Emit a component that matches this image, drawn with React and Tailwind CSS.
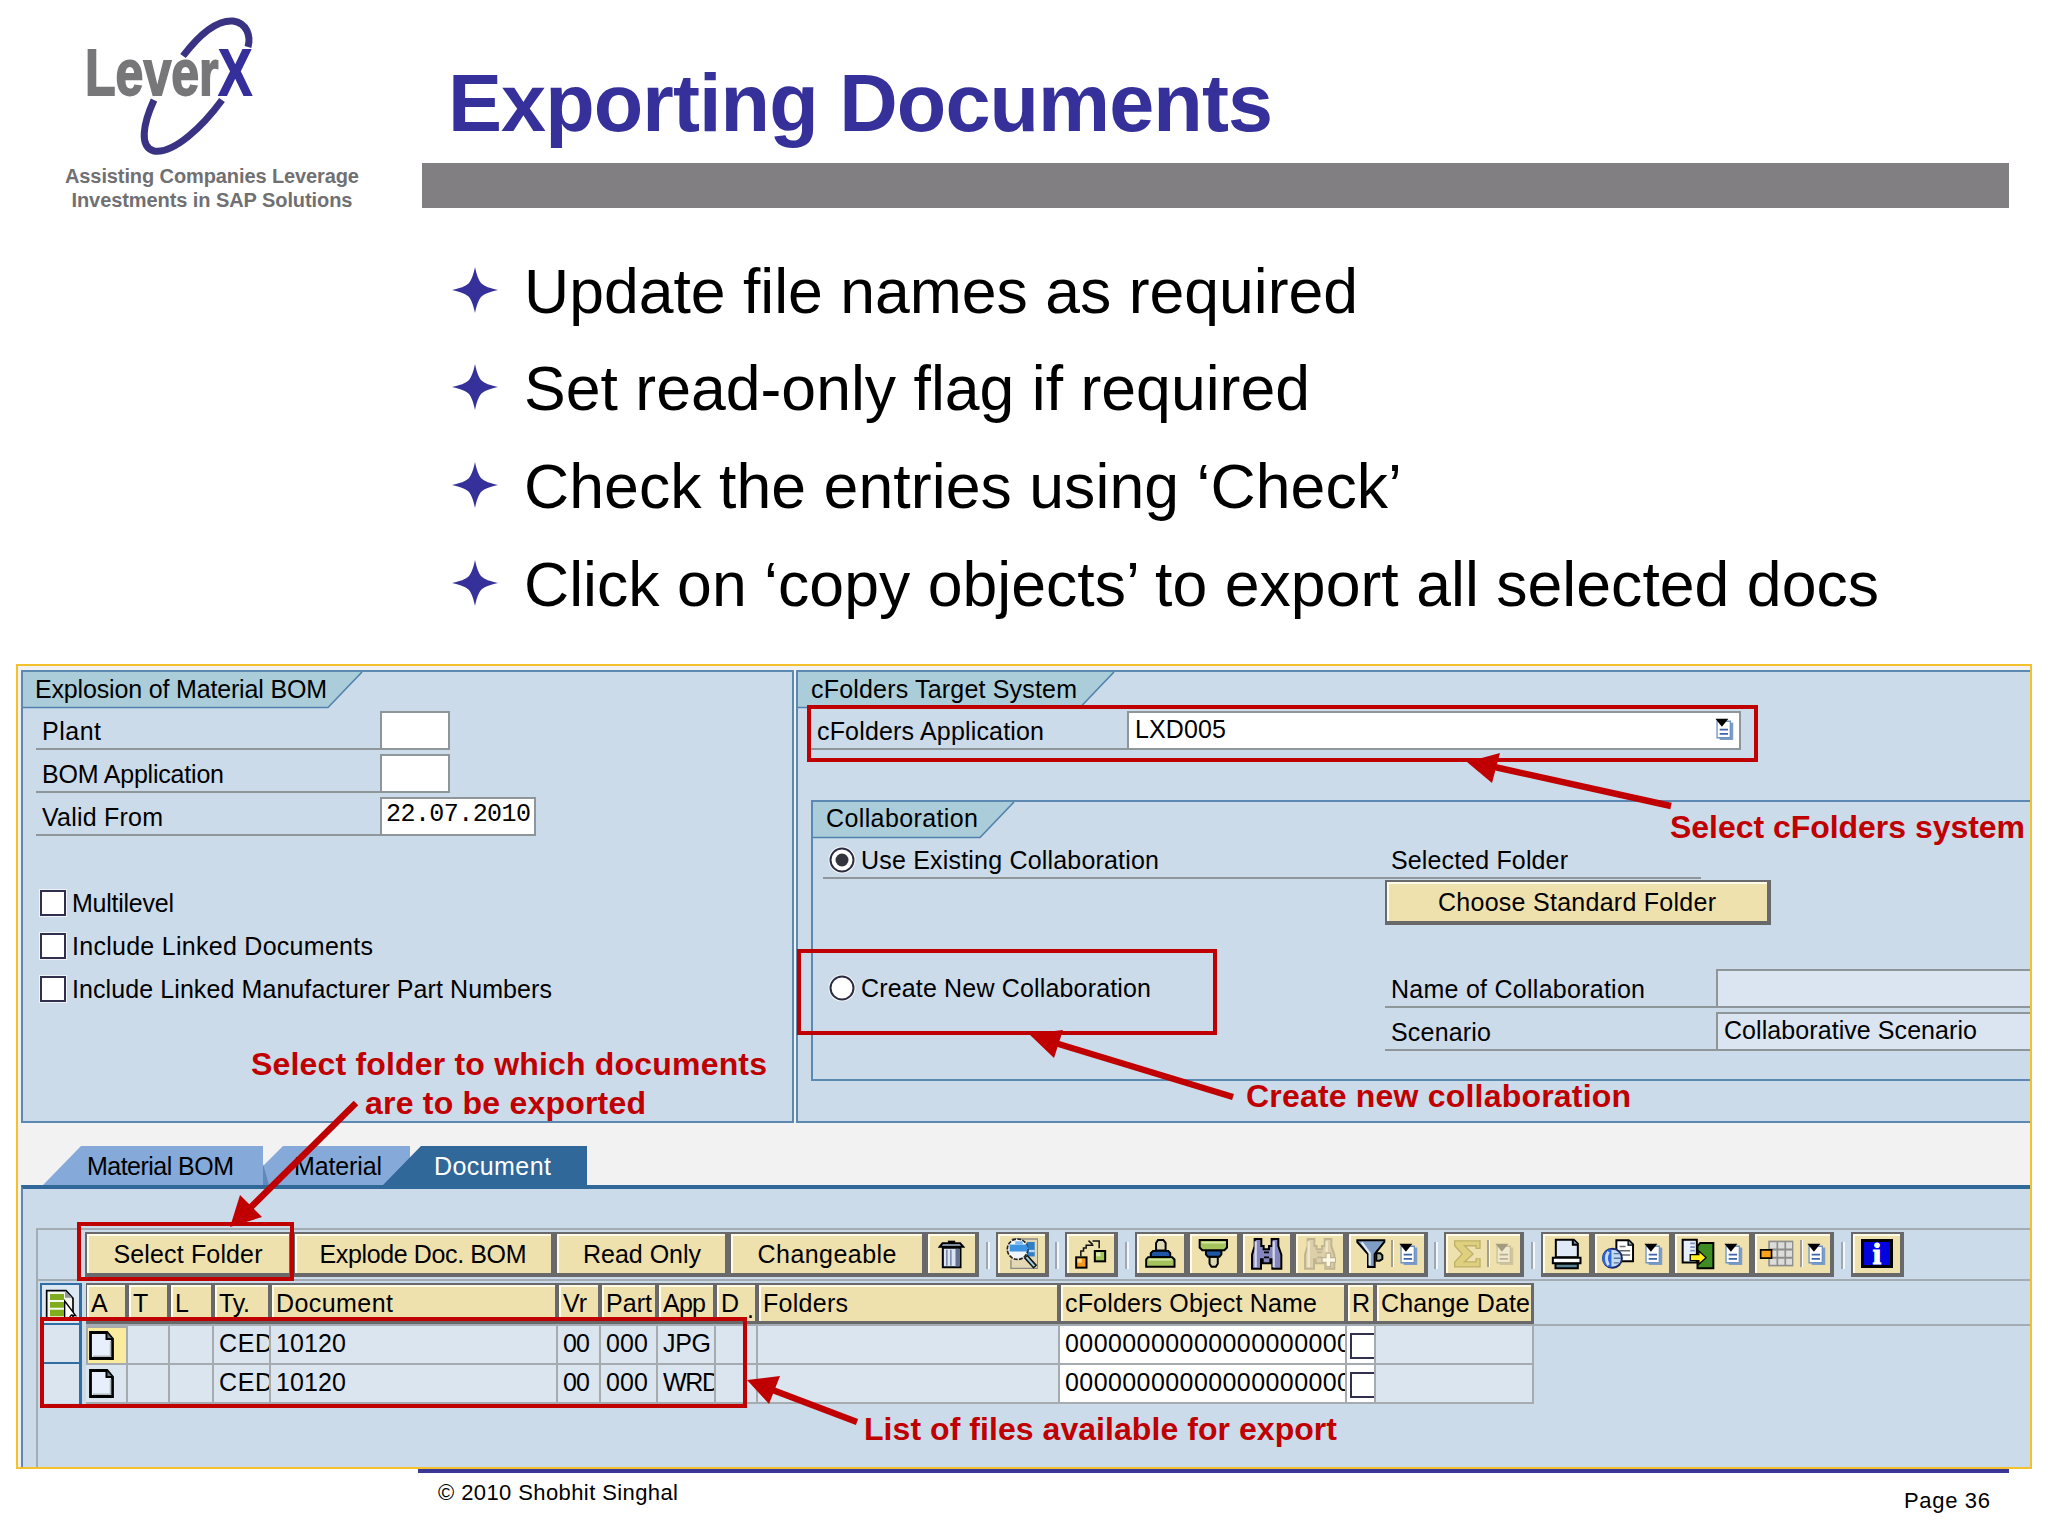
import { useLayoutEffect, useRef } from 'react';
import clsx from 'clsx';

const BULLETS = [
  { text: 'Update file names as required', width: 'w-[834px]' },
  { text: 'Set read-only flag if required', width: 'w-[786px]' },
  { text: 'Check the entries using ‘Check’', width: 'w-[878px]' },
  { text: 'Click on ‘copy objects’ to export all selected docs', width: 'w-[1355px]' },
];

const COLUMNS = [
  { key: 'a', label: 'A', width: 'w-[42px]', text: 'w-[16px]' },
  { key: 't', label: 'T', width: 'w-[42px]', text: 'w-[15px]' },
  { key: 'l', label: 'L', width: 'w-[44px]', text: 'w-[14px]' },
  { key: 'type', label: 'Ty.', width: 'w-[57px]', text: 'w-[31px]' },
  { key: 'document', label: 'Document', width: 'w-[287px]', text: 'w-[117px]' },
  { key: 'version', label: 'Vr', width: 'w-[43px]', text: 'w-[24px]' },
  { key: 'part', label: 'Part', width: 'w-[57px]', text: 'w-[46px]' },
  { key: 'app', label: 'App', width: 'w-[58px]', text: 'w-[43px]' },
  { key: 'd', label: 'D', width: 'w-[42px]', text: 'w-[17px]', dot: true },
  { key: 'folders', label: 'Folders', width: 'w-[302px]', text: 'w-[85px]' },
  { key: 'name', label: 'cFolders Object Name', width: 'w-[287px]', text: 'w-[252px]' },
  { key: 'r', label: 'R', width: 'w-[29px]', text: 'w-[18px]' },
  { key: 'date', label: 'Change Date', width: 'w-[158px]', text: 'w-[149px]' },
];

const CELL_WIDTHS = {
  type: 'w-[54px]',
  document: 'w-[70px]',
  version: 'w-[27px]',
  part: 'w-[42px]',
  app: 'w-[48px]',
  name: 'w-[286px]',
};

const ROWS = [
  { type: 'CED', document: '10120', version: '00', part: '000', app: 'JPG', name: '00000000000000000000' },
  { type: 'CED', document: '10120', version: '00', part: '000', app: 'WRD', name: '00000000000000000000' },
];

// Spreads the letters so that the text fills the width given by its class.
function Fit({ className, children }) {
  const box = useRef(null);
  const inner = useRef(null);

  useLayoutEffect(() => {
    const el = inner.current;
    el.style.letterSpacing = '0px';
    const count = el.textContent.length;
    if (count < 2) return;
    const room = box.current.clientWidth - el.getBoundingClientRect().width;
    el.style.letterSpacing = `${room / (count - 1)}px`;
  }, [children]);

  return (
    <span ref={box} className={clsx('block shrink-0 whitespace-nowrap', className)}>
      <span ref={inner} className="inline-block whitespace-pre">{children}</span>
    </span>
  );
}

function Logo() {
  return (
    <svg viewBox="0 0 200 150" className="ml-[75px] mt-[10px] h-[150px] w-[200px]">
      <g fill="none" stroke="#3a3384" strokeWidth="7">
        <path d="M108 46 C124 25 142 10 158 11 C172 13 176 26 173 37" />
        <path d="M79 90 C68 114 64 137 79 141 C99 144 128 116 147 90" />
      </g>
      <text x="10" y="85" textLength="167" lengthAdjust="spacingAndGlyphs" fontSize="65" fontWeight="bold" fontFamily="Liberation Sans, sans-serif" strokeWidth="1.800" fill="#77777a" stroke="#77777a">
        Lever<tspan fill="#352f9c" stroke="#352f9c">X</tspan>
      </text>
    </svg>
  );
}

function Star() {
  return (
    <svg viewBox="0 0 46 46" className="h-[46px] w-[46px]" fill="#35309a">
      <path d="M23 0 C25 9 26.500 13 29.500 16.500 C33 19.500 37 21 46 23 C37 25 33 26.500 29.500 29.500 C26.500 33 25 37 23 46 C21 37 19.500 33 16.500 29.500 C13 26.500 9 25 0 23 C9 21 13 19.500 16.500 16.500 C19.500 13 21 9 23 0Z" />
    </svg>
  );
}

function GroupTitle({ points, edge, className, textClass, children }) {
  return (
    <div className={clsx('relative flex items-center', className)}>
      <svg className="absolute left-0 top-0 h-[37px] w-[360px]">
        <polygon points={points} fill="#abcdd9" />
        <polyline points={edge} fill="none" stroke="#4f82ae" strokeWidth="1.600" />
      </svg>
      <Fit className={clsx('relative', textClass)}>{children}</Fit>
    </div>
  );
}

function Checkbox({ className }) {
  return <span className={clsx('block h-[26px] w-[26px] shrink-0 border-2 border-[#30304e] bg-white', className)} />;
}

function CheckRow({ label, width }) {
  return (
    <div className="flex h-[43px] items-center pl-[17px] pt-[2px]">
      <Checkbox className="outline-1 outline-[#eef3f8]" />
      <Fit className={clsx('ml-[6px]', width)}>{label}</Fit>
    </div>
  );
}

function Radio({ checked }) {
  return (
    <svg viewBox="0 0 28 28" className="h-[28px] w-[28px] shrink-0">
      <circle cx="14" cy="14" r="13.500" fill="#f4f7fb" />
      <circle cx="14" cy="14" r="11.500" fill="#fff" stroke="#2c2c40" strokeWidth="2" />
      {checked ? <circle cx="14" cy="14" r="6.500" fill="#34343f" /> : null}
    </svg>
  );
}

function FieldRow({ label, labelWidth, textWidth, field, children }) {
  return (
    <div className="flex h-[43px] pb-[2px]">
      <div className={clsx('flex shrink-0 items-center border-b-2 border-[#8f9699] pl-[6px] pt-[5px]', labelWidth)}>
        <Fit className={textWidth}>{label}</Fit>
      </div>
      <div className={clsx('mt-[2px] flex items-center border-2 border-[#8f9699] pb-[2px]', field)}>{children}</div>
    </div>
  );
}

function MenuIcon({ disabled }) {
  const line = disabled ? '#b9b091' : '#3d66a8';
  return (
    <svg viewBox="176 50 58 68" className="h-[22px] w-[19px] shrink-0">
      <path d="M190 64 H232 V118 H190Z" fill={disabled ? '#cfc59d' : '#7f9cc6'} />
      <path d="M182 60 H223 V111 H182Z" fill={disabled ? '#efe8cc' : '#fff'} stroke={disabled ? '#c9c09a' : '#6d92c4'} strokeWidth="4" />
      <path d="M177 52 H217 L197 77Z" fill={disabled ? '#a29b7f' : '#000'} />
      <path d="M190 86 H216 M190 99 H216" stroke={line} strokeWidth="5" />
    </svg>
  );
}

function TrashIcon() {
  return (
    <svg viewBox="117 52 80 90" className="h-[30px] w-[27px]">
      <path d="M131 78 H184 V137 H131Z" fill="#dbe4f0" stroke="#000" strokeWidth="6" />
      <path d="M143 84 V132 M155 84 V132" stroke="#7f8dac" strokeWidth="5" />
      <path d="M169 82 H181 V134 H169Z" fill="#64708f" />
      <path d="M122 75 L130 65 H183 L192 75Z" fill="#a9bbd2" stroke="#000" strokeWidth="6" />
      <path d="M146 61 H168" stroke="#000" strokeWidth="8" />
    </svg>
  );
}

function DisplayIcon() {
  return (
    <svg viewBox="314 52 100 98" className="h-[33px] w-[33px]">
      <path d="M334 57 H413 V146 H332 V120" fill="#e3d8b4" stroke="#8a8a86" strokeWidth="4" />
      <path d="M380 66 H404 V110 H380Z" fill="#2f7fc8" />
      <path d="M386 90 H404 V97 H386Z" fill="#bcd4ee" />
      <circle cx="352" cy="88" r="31" fill="#f1f6fa" stroke="#222" strokeWidth="5" strokeDasharray="12 4" />
      <path d="M328 74 H382 V95 H328Z" fill="#3f93e0" />
      <path d="M345 64 H368 V74 H345Z" fill="#78b6ee" />
      <path d="M377 110 L406 142" stroke="#111" strokeWidth="15" />
      <path d="M379 112 L403 139" stroke="#9fd0e6" strokeWidth="6" />
    </svg>
  );
}

function LinkIcon() {
  return (
    <svg viewBox="522 52 98 90" className="h-[30px] w-[33px]">
      <path d="M542 104 V88 H550 V79 H558 V71 H580 M565 57 L577 68 M577 58 H597 V80" fill="none" stroke="#111" strokeWidth="4.500" />
      <rect x="528" y="107" width="31" height="31" fill="#f59a1c" stroke="#000" strokeWidth="6" />
      <rect x="532" y="111" width="13" height="12" fill="#ffd98c" />
      <rect x="584" y="88" width="31" height="31" fill="#a6c45c" stroke="#000" strokeWidth="6" />
      <rect x="588" y="92" width="13" height="12" fill="#dcebb0" />
    </svg>
  );
}

function SortUpIcon() {
  return (
    <svg viewBox="732 54 93 88" className="h-[29px] w-[31px]" stroke="#000" strokeWidth="6">
      <path d="M765 89 V66 L771 57 H787 L794 66 V89Z" fill="#ddd9b4" />
      <path d="M749 109 V97 L756 90 H802 L808 97 V109Z" fill="#1e56a4" />
      <path d="M735 138 V116 L741 109 H814 L821 116 V138Z" fill="#a5c35d" />
      <path d="M742 117 H812" stroke="#d5e6a5" strokeWidth="5" />
    </svg>
  );
}

function SortDownIcon() {
  return (
    <svg viewBox="892 54 92 88" className="h-[29px] w-[31px]" stroke="#000" strokeWidth="6">
      <path d="M926 108 H951 V129 L945 138 H932 L926 129Z" fill="#ddd9b4" />
      <path d="M915 88 H962 V101 L956 108 H921 L915 101Z" fill="#1e56a4" />
      <path d="M896 57 H979 V80 L971 88 H904 L896 80Z" fill="#a5c35d" />
      <path d="M902 65 H974" stroke="#d5e6a5" strokeWidth="5" />
    </svg>
  );
}

function FindIcon({ next }) {
  const stroke = next ? '#c0b593' : '#000';
  return (
    <svg viewBox="1054 54 96 96" className="h-[32px] w-[32px]">
      <path d="M1065 57 H1085 V78 H1092 V88 H1108 V78 H1116 V57 H1136 V78 L1145 104 V146 H1118 V118 H1112 V130 H1089 V118 H1084 V146 H1057 V104 L1065 78Z" fill={next ? '#ddd0a9' : '#8486bd'} stroke={stroke} strokeWidth="6" />
      <path d="M1068 64 V142 M1122 64 V142" stroke={next ? '#f1e9cd' : '#d5d7ee'} strokeWidth="7" />
      <path d="M1093 97 H1108 M1093 112 H1108" stroke={stroke} strokeWidth="5" />
      {next ? <path d="M1108 113 H1120 V99 H1134 V113 H1149 V127 H1134 V140 H1120 V127 H1108Z" fill="#fbf7e4" stroke="#c0b593" strokeWidth="4" /> : null}
    </svg>
  );
}

function FilterIcon() {
  return (
    <svg viewBox="53 39 90 90" className="h-[30px] w-[30px]" stroke="#000" strokeWidth="6">
      <path d="M114 82 H126 L132 88 V99 L124 104 H114Z" fill="#a9b59c" />
      <path d="M57 43 H138 V48 L109 84 V123 H89 V84 L57 48Z" fill="#7f9dc4" />
      <path d="M70 49 L94 82 V118" fill="none" stroke="#dfe9f5" strokeWidth="7" />
    </svg>
  );
}

function SumIcon() {
  return (
    <svg viewBox="341 38 88 90" className="h-[30px] w-[29px]">
      <path d="M346 43 H423 V66 H411 V58 H376 L402 83 L376 107 H411 V98 H423 V122 H346 V108 L369 83 L346 58Z" fill="#ded07f" stroke="#bfb167" strokeWidth="4" />
    </svg>
  );
}

function PrintIcon() {
  return (
    <svg viewBox="636 38 92 96" className="h-[32px] w-[31px]" stroke="#000" strokeWidth="6">
      <path d="M650 96 V43 H704 L716 55 V96Z" fill="#dfe9f7" />
      <path d="M701 43 V58 H716" fill="#6f93ac" />
      <path d="M641 97 H724 V114 H641Z" fill="#fff" />
      <path d="M649 115 H716 V129 H649Z" fill="#5a8494" />
    </svg>
  );
}

function WebIcon() {
  return (
    <svg viewBox="785 37 104 96" className="h-[32px] w-[34px]">
      <path d="M832 43 H870 L883 56 V107 H832Z" fill="#fff" stroke="#000" strokeWidth="6" />
      <path d="M868 43 V58 H883" fill="#8aa0b5" stroke="#000" strokeWidth="4" />
      <path d="M842 62 H860 M842 75 H874 M842 88 H874" stroke="#6b6b6b" strokeWidth="4" />
      <circle cx="820" cy="98" r="29" fill="#c3daf3" stroke="#1b2a6b" strokeWidth="6" />
      <path d="M817 70 A28 28 0 0 0 817 126 Z" fill="#2f67d8" />
      <path d="M808 78 C800 90 800 106 808 119" fill="none" stroke="#c5dcfa" strokeWidth="9" />
      <path d="M824 84 H844 M824 98 H846 M824 112 H840" stroke="#56789f" strokeWidth="4" />
    </svg>
  );
}

function ExportIcon() {
  return (
    <svg viewBox="1026 38 103 96" className="h-[32px] w-[34px]">
      <path d="M1076 62 L1084 53 H1124 V129 H1076Z" fill="#3f8c24" stroke="#000" strokeWidth="6" />
      <path d="M1031 43 H1074 V112 H1031Z" fill="#e7effa" stroke="#000" strokeWidth="6" />
      <path d="M1054 54 H1068 M1054 65 H1068 M1054 76 H1068" stroke="#7e93ba" strokeWidth="5" />
      <path d="M1054 88 H1080 V77 L1102 97 L1080 117 V106 H1054Z" fill="#ffee22" stroke="#000" strokeWidth="4" />
    </svg>
  );
}

function LayoutIcon() {
  return (
    <svg viewBox="1264 42 112 86" className="h-[29px] w-[37px]">
      <path d="M1292 46 H1368 V124 H1292Z" fill="#8d8d8d" />
      <g fill="#dcdcda">
        <path d="M1297 51 H1317 V70 H1297Z M1322 51 H1341 V70 H1322Z M1346 51 H1364 V70 H1346Z" />
        <path d="M1297 76 H1317 V95 H1297Z M1322 76 H1341 V95 H1322Z M1346 76 H1364 V95 H1346Z" />
        <path d="M1297 101 H1317 V119 H1297Z M1322 101 H1341 V119 H1322Z M1346 101 H1364 V119 H1346Z" />
      </g>
      <path d="M1269 74 H1302 V99 H1269Z" fill="#f7a21b" stroke="#000" strokeWidth="5" />
    </svg>
  );
}

function InfoIcon() {
  return (
    <svg viewBox="0 0 32 29" className="h-[29px] w-[32px]">
      <rect x="1.500" y="1.500" width="29" height="26" fill="#0303e0" stroke="#000" strokeWidth="3" />
      <text x="16" y="24.500" textAnchor="middle" fontSize="30" fontWeight="bold" fontFamily="Liberation Serif, serif" fill="#fff" stroke="#fff" strokeWidth="1.200">i</text>
    </svg>
  );
}

function SelectAllIcon() {
  return (
    <svg viewBox="45 42 96 84" className="h-[28px] w-[32px]">
      <path d="M50 128 V47 H108 L129 70 V128" fill="#f4f8ee" stroke="#000" strokeWidth="5" />
      <path d="M105 47 V68 H127Z" fill="#8d949b" />
      <path d="M60 57 H102 V75 H60Z M60 81 H106 V98 H60Z M60 104 H106 V124 H60Z" fill="#80ad1c" />
      <path d="M104 78 L137 122 L124 120 L118 128 H104Z" fill="#fff" stroke="#000" strokeWidth="4" />
    </svg>
  );
}

function PageIcon() {
  return (
    <svg viewBox="0 0 25 29" className="h-[29px] w-[25px] shrink-0">
      <path d="M1.500 1.500 H18 L23.500 8 V27.500 H1.500Z" fill="#e6effb" stroke="#000" strokeWidth="2.800" />
      <path d="M17.500 1.500 V8 H23.500" fill="#6c7880" stroke="#000" strokeWidth="2" />
      <path d="M4 25.300 H21.500 V10" fill="none" stroke="#b3b8bd" strokeWidth="1.500" />
    </svg>
  );
}

function SapButton({ className, children }) {
  return (
    <div className={clsx('flex h-[45px] shrink-0 items-center justify-center border-b-4 border-l-2 border-r-4 border-t-2 border-[#69696b] bg-[#efe1ad] pt-px shadow-[inset_2px_2px_0_#fffbe6]', className)}>
      {children}
    </div>
  );
}

function ButtonSplit() {
  return <span className="block h-[27px] w-[3px] shrink-0 border-l-2 border-r border-l-[#a3a093] border-r-white" />;
}

function ToolbarGap({ narrow }) {
  return (
    <div className={clsx('flex shrink-0 items-center justify-center', narrow ? 'w-[16px]' : 'w-[17px]')}>
      <span className="block h-[27px] w-[4px] border-l-2 border-r-2 border-l-[#9ea8b2] border-r-[#f3f6fa]" />
    </div>
  );
}

function Toolbar() {
  return (
    <div className="flex h-[51px] border-b-2 border-[#a4acb3] pl-[47px] pt-[2px]">
      <SapButton className="w-[208px]"><Fit className="w-[149px]">Select Folder</Fit></SapButton>
      <SapButton className="w-[262px]"><Fit className="w-[207px]">Explode Doc. BOM</Fit></SapButton>
      <SapButton className="w-[174px]"><Fit className="ml-[2px] w-[118px]">Read Only</Fit></SapButton>
      <SapButton className="w-[197px]"><Fit className="ml-[1px] w-[139px]">Changeable</Fit></SapButton>
      <SapButton className="w-[53px]"><TrashIcon /></SapButton>
      <ToolbarGap />
      <SapButton className="w-[53px]"><DisplayIcon /></SapButton>
      <ToolbarGap narrow />
      <SapButton className="w-[53px]"><LinkIcon /></SapButton>
      <ToolbarGap />
      <SapButton className="w-[53px]"><SortUpIcon /></SapButton>
      <SapButton className="w-[53px]"><SortDownIcon /></SapButton>
      <SapButton className="w-[53px]"><FindIcon /></SapButton>
      <SapButton className="w-[53px]"><FindIcon next /></SapButton>
      <SapButton className="w-[81px] gap-[5px]"><FilterIcon /><ButtonSplit /><MenuIcon /></SapButton>
      <ToolbarGap narrow />
      <SapButton className="w-[80px] gap-[5px]"><SumIcon /><ButtonSplit /><MenuIcon disabled /></SapButton>
      <ToolbarGap />
      <SapButton className="w-[52px]"><PrintIcon /></SapButton>
      <SapButton className="w-[80px] gap-[9px]"><WebIcon /><MenuIcon /></SapButton>
      <SapButton className="w-[80px] gap-[9px]"><ExportIcon /><MenuIcon /></SapButton>
      <SapButton className="w-[81px] gap-[4px]"><LayoutIcon /><ButtonSplit /><MenuIcon /></SapButton>
      <ToolbarGap />
      <SapButton className="w-[53px]"><InfoIcon /></SapButton>
    </div>
  );
}

function TableCell({ column, row, first }) {
  const { key } = column;
  const isBox = key === 'a' || key === 'r';
  const focused = key === 'a' && first;
  return (
    <div
      className={clsx(
        'flex h-[39px] shrink-0 items-center overflow-hidden border-[#a6abb0]',
        column.width,
        focused ? 'border-2 bg-[#fbeb9c] pl-px' : 'border-b-2 border-r-2',
        !focused && (key === 'name' || key === 'r' ? 'bg-white' : 'bg-[#dae5f0]'),
        key === 'r' && 'pl-[3px] pt-[3px]',
        key === 'a' && !first && 'pl-[3px]',
        !isBox && 'pb-[3px] pl-[5px]'
      )}
    >
      {key === 'a' ? <PageIcon /> : null}
      {key === 'r' ? <Checkbox /> : null}
      {row[key] ? (
        <div className="overflow-hidden">
          <Fit className={row[key] === 'WRD' ? 'w-[57px]' : CELL_WIDTHS[key]}>{row[key]}</Fit>
        </div>
      ) : null}
    </div>
  );
}

function DocumentTable() {
  return (
    <div className="flex pl-[2px] pt-[2px]">
      <div className="mr-[4px] w-[42px] shrink-0 border-r-[3px] border-[#2f6da3]">
        <div className="flex h-[42px] items-start justify-center border-b-2 border-l-2 border-t-2 border-[#2f6da3] bg-[#dce8f4] pt-[4px]">
          <SelectAllIcon />
        </div>
        <div className="h-[39px] border-b-2 border-[#2f6da3] bg-[#dae5f0]" />
        <div className="h-[39px] bg-[#dae5f0]" />
      </div>
      <div className="flex-1">
        <div className="flex h-[43px] border-b-2 border-[#a4acb3]">
          {COLUMNS.map((column) => (
            <div
              key={column.key}
              className={clsx('flex h-[41px] shrink-0 items-center overflow-hidden border-b-[3px] border-l border-r-[3px] border-t-2 border-[#69696b] bg-[#efe1ad] pl-[4px] pt-px shadow-[inset_2px_2px_0_#fffbe6]', column.width)}
            >
              <Fit className={column.text}>{column.label}</Fit>
              {column.dot ? <span className="ml-[9px] mt-[12px] leading-[24px]">.</span> : null}
            </div>
          ))}
        </div>
        {ROWS.map((row, index) => (
          <div key={index} className="flex">
            {COLUMNS.map((column) => (
              <TableCell key={column.key} column={column} row={row} first={index === 0} />
            ))}
          </div>
        ))}
      </div>
    </div>
  );
}

function FolderTab({ className, points, fill, fold, textClass, children }) {
  return (
    <div className={clsx('relative flex h-[39px] shrink-0 items-center pt-px', className)}>
      <svg className="absolute left-0 top-0 h-full w-full">
        <polygon points={points} fill={fill} />
        {fold ? <polygon points={fold} fill="#6089bb" /> : null}
      </svg>
      <Fit className={clsx('relative', textClass)}>{children}</Fit>
    </div>
  );
}

function Annotations() {
  return (
    <div className="absolute inset-0 text-[32px] font-bold leading-[36px] text-[#c00000]">
      <div className="absolute left-[807px] top-[705px] h-[57px] w-[951px] border-4 border-[#c00000]" />
      <div className="absolute left-[797px] top-[949px] h-[86px] w-[420px] border-4 border-[#c00000]" />
      <div className="absolute left-[77px] top-[1222px] h-[59px] w-[217px] border-4 border-[#c00000]" />
      <div className="absolute left-[40px] top-[1317px] h-[91px] w-[707px] border-4 border-[#c00000]" />

      <svg viewBox="0 0 2048 1536" className="absolute inset-0 h-full w-full" fill="#c00000" stroke="#c00000">
        <path d="M1490 766 L1671 806" strokeWidth="6.500" />
        <path d="M1467 762 L1500 753 L1492 783Z" stroke="none" />
        <path d="M1052 1042 L1233 1097" strokeWidth="6.500" />
        <path d="M1029 1034 L1063 1030 L1054 1058Z" stroke="none" />
        <path d="M248 1210 L356 1103" strokeWidth="6.500" />
        <path d="M230 1227 L240 1195 L262 1217Z" stroke="none" />
        <path d="M770 1389 L857 1422" strokeWidth="6.500" />
        <path d="M747 1380 L780 1376 L769 1404Z" stroke="none" />
      </svg>

      <Fit className="absolute left-[251px] top-[1046px] w-[516px]">Select folder to which documents</Fit>
      <Fit className="absolute left-[365px] top-[1085px] w-[281px]">are to be exported</Fit>
      <Fit className="absolute left-[1670px] top-[809px] w-[355px]">Select cFolders system</Fit>
      <Fit className="absolute left-[1246px] top-[1078px] w-[385px]">Create new collaboration</Fit>
      <Fit className="absolute left-[864px] top-[1411px] w-[473px]">List of files available for export</Fit>
    </div>
  );
}

export default function App() {
  return (
    <div className="relative h-[1536px] w-[2048px] overflow-hidden bg-white font-['Liberation_Sans',Arial,sans-serif] text-black">
      <header className="flex h-[208px]">
        <div className="w-[422px] shrink-0">
          <Logo />
          <div className="flex flex-col items-center pl-[2px] text-[20px] font-bold leading-[24px] text-[#707073]">
            <Fit className="mt-[4px] w-[294px]">Assisting Companies Leverage</Fit>
            <Fit className="w-[281px]">Investments in SAP Solutions</Fit>
          </div>
        </div>
        <div className="w-[1587px]">
          <h1 className="h-[163px] pl-[26px] pt-[57px] text-[81px] font-bold leading-[92px] text-[#35309a]">
            <Fit className="w-[825px]">Exporting Documents</Fit>
          </h1>
          <div className="h-[45px] bg-[#827f83]" />
        </div>
      </header>

      <ul className="mt-[33px] pl-[452px] text-[62.500px]">
        {BULLETS.map((bullet) => (
          <li key={bullet.text} className="flex h-[97.600px] items-center">
            <Star />
            <Fit className={clsx('ml-[26px] pt-[2px] leading-[72px]', bullet.width)}>{bullet.text}</Fit>
          </li>
        ))}
      </ul>

      <main className="ml-[16px] mt-[32.600px] h-[805px] w-[2016px] overflow-hidden border-2 border-[#f4c02c] bg-[#f2f2f3] text-[25px] leading-[28px]">
        <div className="flex gap-[2px] pl-[3px] pt-[4px]">
          <section className="h-[453px] w-[773px] shrink-0 border-2 border-[#5c89b1] bg-[#ccdbe9]">
            <GroupTitle className="h-[37px] pb-[3px] pl-[12px]" textClass="w-[292px]" points="0,0 339,0 305,35 0,35" edge="0,35.500 305,35.500 339,0">
              Explosion of Material BOM
            </GroupTitle>
            <div className="pl-[13px]">
              <FieldRow label="Plant" labelWidth="w-[344px]" textWidth="w-[59px]" field="w-[70px] bg-white" />
              <FieldRow label="BOM Application" labelWidth="w-[344px]" textWidth="w-[182px]" field="w-[70px] bg-white" />
              <FieldRow label="Valid From" labelWidth="w-[344px]" textWidth="w-[121px]" field="w-[156px] bg-white pl-[4px]">
                <Fit className="w-[145px] font-['Liberation_Mono',monospace]">22.07.2010</Fit>
              </FieldRow>
            </div>
            <div className="h-[43px]" />
            <CheckRow label="Multilevel" width="w-[102px]" />
            <CheckRow label="Include Linked Documents" width="w-[301px]" />
            <CheckRow label="Include Linked Manufacturer Part Numbers" width="w-[480px]" />
          </section>

          <section className="h-[453px] w-[1240px] shrink-0 border-2 border-[#5c89b1] bg-[#ccdbe9]">
            <GroupTitle className="h-[37px] pb-[3px] pl-[13px]" textClass="w-[266px]" points="0,0 316,0 282,35 0,35" edge="0,35.500 282,35.500 316,0">
              cFolders Target System
            </GroupTitle>
            <div className="pl-[13px]">
              <FieldRow label="cFolders Application" labelWidth="w-[316px]" textWidth="w-[227px]" field="w-[614px] justify-between bg-white pl-[6px] pr-[5px]">
                <Fit className="w-[91px]">LXD005</Fit>
                <MenuIcon />
              </FieldRow>
              <div className="mt-[48px] h-[281px] w-[1230px] border-2 border-[#5c89b1]">
                <GroupTitle className="h-[36px] pb-[3px] pl-[13px]" textClass="w-[152px]" points="0,0 201,0 167,35 0,35" edge="0,35.500 167,35.500 201,0">
                  Collaboration
                </GroupTitle>
                <div className="ml-[10px] flex h-[41px] w-[878px] items-center border-b-2 border-[#8f9699] pl-[5px] pt-[5px]">
                  <Radio checked />
                  <Fit className="ml-[5px] w-[298px]">Use Existing Collaboration</Fit>
                  <Fit className="ml-[232px] w-[177px]">Selected Folder</Fit>
                </div>
                <div className="ml-[572px] mt-px">
                  <SapButton className="w-[386px]"><Fit className="w-[278px]">Choose Standard Folder</Fit></SapButton>
                </div>
                <div className="mt-[42px] flex">
                  <div className="flex h-[43px] w-[572px] shrink-0 items-center pl-[15px]">
                    <Radio />
                    <Fit className="ml-[5px] w-[290px]">Create New Collaboration</Fit>
                  </div>
                  <div>
                    <FieldRow label="Name of Collaboration" labelWidth="w-[331px]" textWidth="w-[254px]" field="w-[340px] bg-[#dae5f1]" />
                    <FieldRow label="Scenario" labelWidth="w-[331px]" textWidth="w-[100px]" field="w-[340px] bg-[#dae5f1] pl-[6px]">
                      <Fit className="w-[253px]">Collaborative Scenario</Fit>
                    </FieldRow>
                  </div>
                </div>
              </div>
            </div>
          </section>
        </div>

        <div className="flex h-[62px] items-end pl-[25px]">
          <FolderTab className="w-[220px] pl-[44px]" points="0,39 38,0 220,0 220,39" fill="#85aad9" textClass="w-[147px]">Material BOM</FolderTab>
          <FolderTab className="w-[147px] pl-[31px]" points="0,39 0,20 20,0 147,0 147,39" fill="#85aad9" fold="0,18 6,39 0,39" textClass="w-[88px]">Material</FolderTab>
          <FolderTab className="-ml-[27px] w-[204px] pl-[51px] text-white" points="0,39 38,0 204,0 204,39" fill="#2f6899" textClass="w-[117px]">Document</FolderTab>
        </div>

        <div className="ml-[3px] h-[290px] border-l-2 border-t-4 border-[#5c89b1] border-t-[#2f6899] bg-[#ccdbe9] pl-[13px] pt-[39px]">
          <div className="h-[250px] border-l-2 border-t-2 border-[#a4acb3]">
            <Toolbar />
            <DocumentTable />
          </div>
        </div>
      </main>

      <footer className="ml-[418px] h-[67px] w-[1591px] border-t-4 border-[#3b3797] text-[22px] leading-[26px]">
        <div className="flex justify-between pl-[20px] pr-[19px]">
          <Fit className="mt-[7px] w-[240px]">© 2010 Shobhit Singhal</Fit>
          <Fit className="mt-[15px] w-[86px]">Page 36</Fit>
        </div>
      </footer>

      <Annotations />
    </div>
  );
}
